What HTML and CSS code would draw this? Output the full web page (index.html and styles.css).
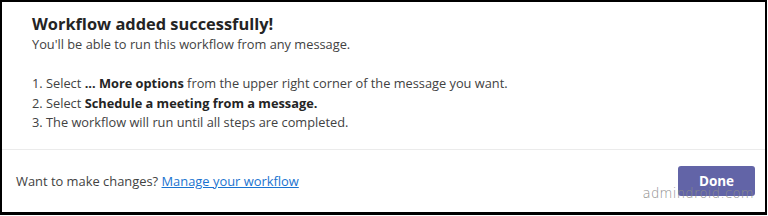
FILE: index.html
```html
<!DOCTYPE html>
<html>
<head>
<meta charset="utf-8">
<link rel="stylesheet" href="styles.css">
</head>
<body>
<div class="dialog">
  <div class="content">
    <h1 class="title">Workflow added successfully!</h1>
    <p class="body-text">You'll be able to run this workflow from any message.<br><br>1. Select <b>... More options</b> from the upper right corner of the message you want.<br>2. Select <b>Schedule a meeting from a message.</b><br>3. The workflow will run until all steps are completed.</p>
  </div>
  <div class="footer">
    <span class="footer-text">Want to make changes? <a class="link" href="#">Manage your workflow</a></span>
    <button class="done">Done</button>
  </div>
  <span class="watermark">admindroid.com</span>
</div>
</body>
</html>
```

FILE: styles.css
```css
html, body {
  margin: 0;
  padding: 0;
  background: #fff;
}
.dialog {
  position: relative;
  box-sizing: border-box;
  width: 767px;
  height: 215px;
  border-style: solid;
  border-color: #000;
  border-width: 2px 2px 3px 2px;
  font-family: "Open Sans", "Noto Sans", sans-serif;
  display: flex;
  flex-direction: column;
}
.content {
  padding: 11px 30px 0 30px;
  height: 148px;
  box-sizing: border-box;
  border-bottom: 1px solid #ebebeb;
}
.title {
  margin: 0;
  font-size: 16.4px;
  line-height: 22px;
  font-weight: 700;
  color: #242424;
}
.body-text {
  margin: 0;
  font-size: 12.8px;
  line-height: 19.5px;
  color: #424242;
}
.body-text b {
  color: #242424;
}
.footer {
  flex: 1;
  display: flex;
  align-items: center;
  justify-content: space-between;
  padding: 0 10px 1px 14px;
}
.footer-text {
  font-size: 12.9px;
  color: #424242;
}
.link {
  color: #1a73d0;
  text-decoration: underline;
}
.done {
  width: 77px;
  height: 30px;
  border: none;
  border-radius: 3px;
  background: #6264a7;
  color: #fff;
  font-family: "Open Sans", sans-serif;
  font-weight: 700;
  font-size: 13.5px;
  padding: 0;
}
.watermark {
  position: absolute;
  right: 11px;
  bottom: 11px;
  font-family: "DejaVu Sans", sans-serif;
  font-weight: 200;
  font-size: 13.2px;
  letter-spacing: 0.3px;
  color: #8a8a8a;
}
```
